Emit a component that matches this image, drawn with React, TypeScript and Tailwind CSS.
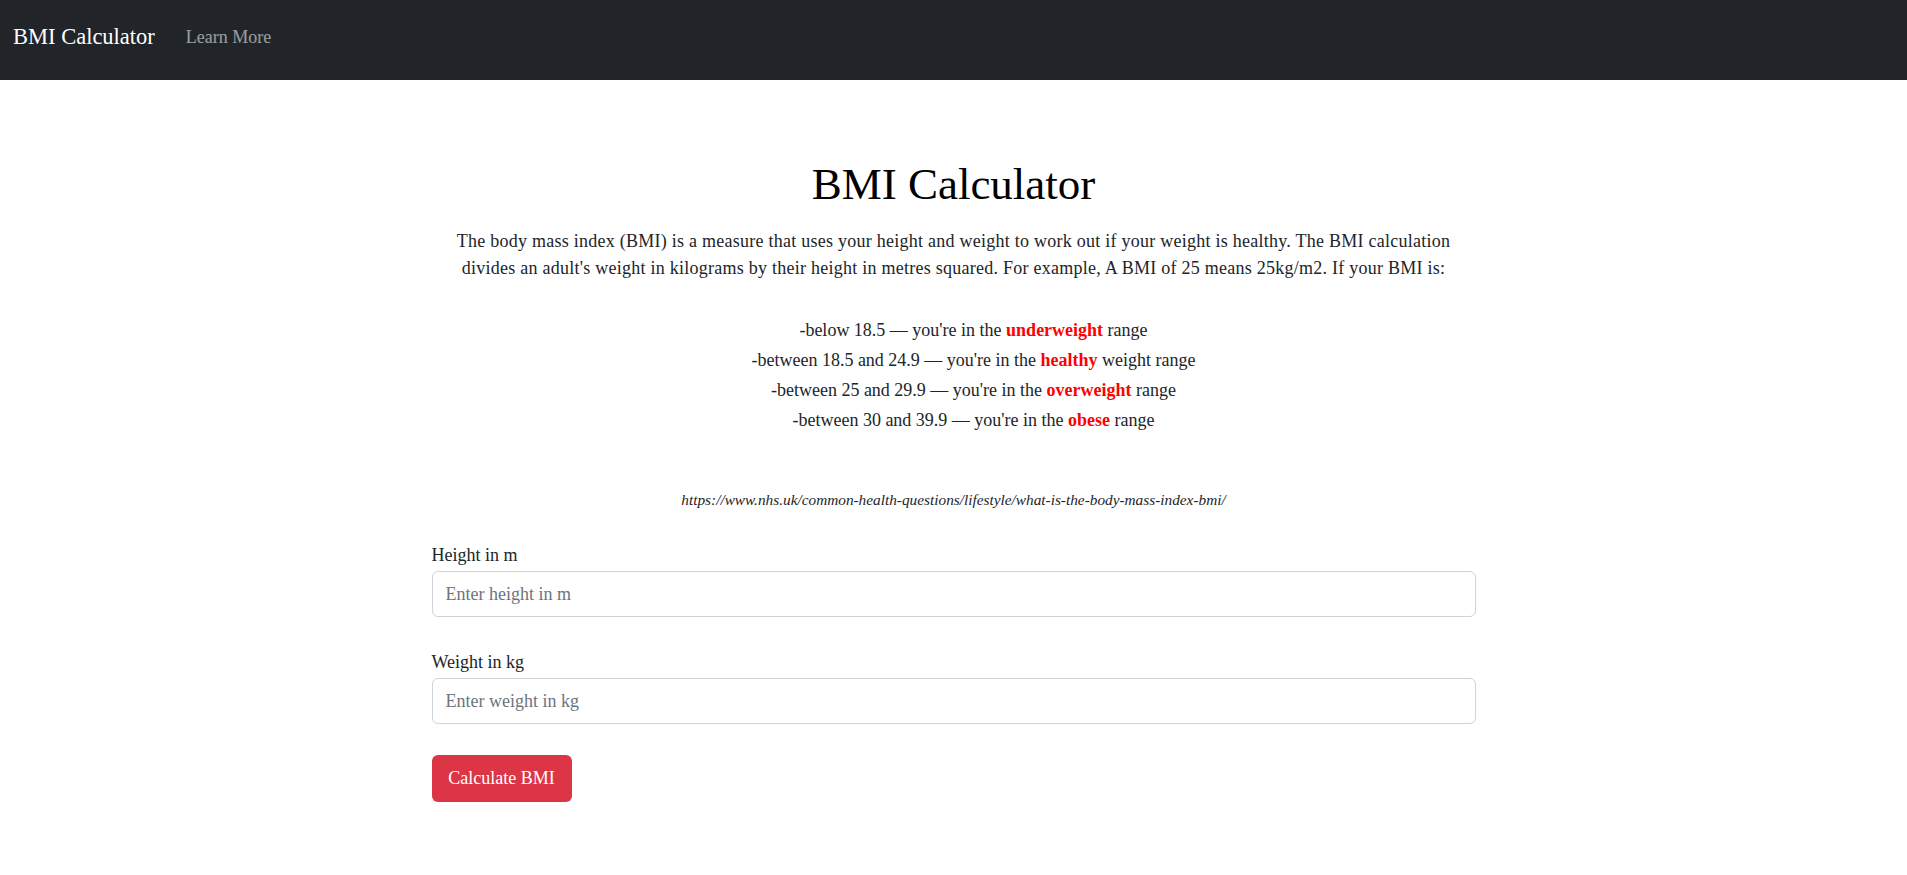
import { useState } from "react";

const ranges = [
  { pre: "-below 18.5 — you're in the ", word: "underweight", post: " range" },
  { pre: "-between 18.5 and 24.9 — you're in the ", word: "healthy", post: " weight range" },
  { pre: "-between 25 and 29.9 — you're in the ", word: "overweight", post: " range" },
  { pre: "-between 30 and 39.9 — you're in the ", word: "obese", post: " range" },
];

export default function App() {
  const [height, setHeight] = useState("");
  const [weight, setWeight] = useState("");
  const [bmi, setBmi] = useState<number | null>(null);

  const calculate = (e: React.FormEvent) => {
    e.preventDefault();
    const h = parseFloat(height);
    const w = parseFloat(weight);
    if (h > 0 && w > 0) setBmi(w / (h * h));
  };

  return (
    <div className="min-h-screen bg-white text-[#212529] font-['Liberation_Serif','Times_New_Roman',serif] text-[18px]">
      <nav className="h-[80px] bg-[#212529] px-[13px] pt-[20px]">
        <div className="flex items-center h-[34px]">
          <a href="#" className="text-white text-[22.5px] leading-[34px]">
            BMI Calculator
          </a>
          <a href="#" className="ml-[31px] text-white/55 text-[18px] leading-[27px] hover:text-white/75">
            Learn More
          </a>
        </div>
      </nav>

      <main className="w-[1044px] mx-auto">
        <div className="text-center">
          <h1 className="mt-[77px] text-[45px] leading-[54px] text-black">BMI Calculator</h1>
          <p className="mt-[17px] leading-[27px] tracking-[0.25px]">
            The body mass index (BMI) is a measure that uses your height and weight to work out if your weight is
            healthy. The BMI calculation divides an adult's weight in kilograms by their height in metres squared. For
            example, A BMI of 25 means 25kg/m2. If your BMI is:
          </p>
          <ul className="mt-[33px] pl-[40px]">
            {ranges.map((r) => (
              <li key={r.word} className="leading-[30px]">
                {r.pre}
                <span className="font-bold text-[#ff0000]">{r.word}</span>
                {r.post}
              </li>
            ))}
          </ul>
          <p className="mt-[53px] italic text-[15.3px] leading-[24px]">
            https://www.nhs.uk/common-health-questions/lifestyle/what-is-the-body-mass-index-bmi/
          </p>
        </div>

        <form onSubmit={calculate} className="mt-[30px]">
          <label className="block leading-[27px] mb-[2px]">Height in m</label>
          <input
            value={height}
            onChange={(e) => setHeight(e.target.value)}
            placeholder="Enter height in m"
            className="w-full h-[46px] px-[13px] border border-[#ced4da] rounded-[6px] text-[18px] placeholder:text-[#6c757d] focus:outline-none"
          />

          <label className="block mt-[32px] leading-[27px] mb-[2px]">Weight in kg</label>
          <input
            value={weight}
            onChange={(e) => setWeight(e.target.value)}
            placeholder="Enter weight in kg"
            className="w-full h-[46px] px-[13px] border border-[#ced4da] rounded-[6px] text-[18px] placeholder:text-[#6c757d] focus:outline-none"
          />

          <button
            type="submit"
            className="mt-[31px] w-[140px] h-[47px] rounded-[6px] bg-[#dc3545] text-white text-[18px] hover:bg-[#bb2d3b]"
          >
            Calculate BMI
          </button>

          {bmi !== null && <p className="mt-4">Your BMI is {bmi.toFixed(1)}</p>}
        </form>
      </main>
    </div>
  );
}
